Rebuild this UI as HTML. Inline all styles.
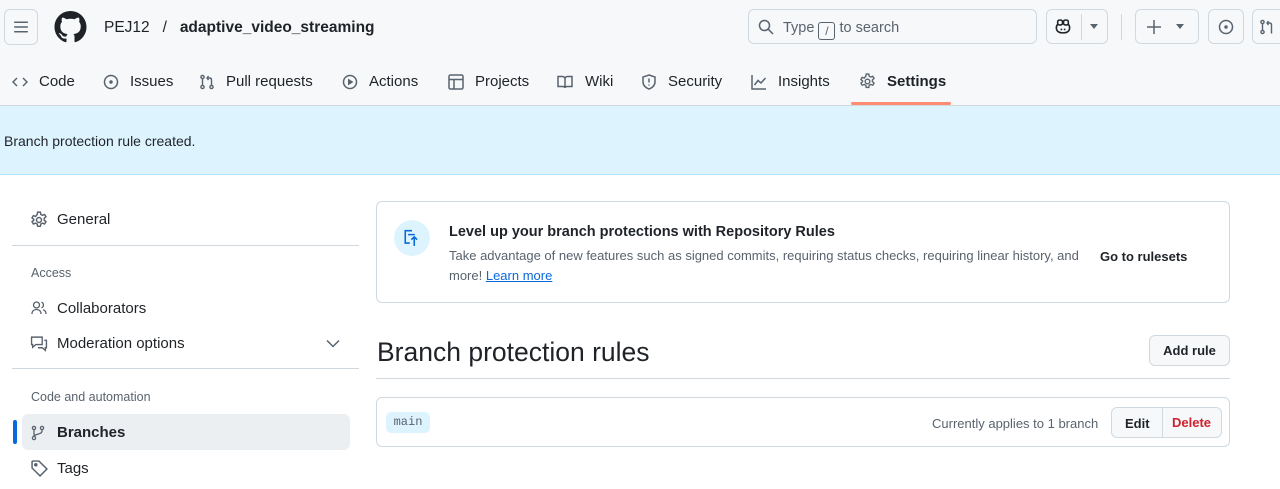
<!DOCTYPE html>
<html><head><meta charset="utf-8"><style>
*{box-sizing:border-box;margin:0;padding:0}
body{width:1280px;height:489px;overflow:hidden;background:#fff;font-family:"Liberation Sans",sans-serif;color:#1f2328;position:relative}
.abs{position:absolute}
svg{display:block}
.hdr{position:absolute;left:0;top:0;width:1280px;height:106px;background:#f6f8fa;border-bottom:1px solid #d1d9e0}
.btn{position:absolute;border:1px solid #d1d9e0;border-radius:6px;background:#f6f8fa}
.tab{position:absolute;top:73px;font-size:15px;display:flex;align-items:center;gap:11px;color:#1f2328}
.flash{position:absolute;left:0;top:106px;width:1280px;height:69px;background:#ddf4ff;border-bottom:1px solid #b6e3ff;font-size:14px;padding:27px 4px}
.side{position:absolute;left:30px;font-size:15px;display:flex;align-items:center;gap:10px}
.hd{position:absolute;left:31px;font-size:12.5px;color:#59636e}
.sep{position:absolute;left:12px;width:347px;height:1px;background:#d1d9e0}
</style></head><body>
<div class="hdr"></div>
<div class="btn" style="left:4px;top:9px;width:34px;height:36px"></div>
<svg class="abs" style="left:13px;top:19px" width="16" height="16" viewBox="0 0 16 16" fill="#59636e"><rect x="1" y="2.5" width="14" height="1.5" rx=".7"/><rect x="1" y="7.25" width="14" height="1.5" rx=".7"/><rect x="1" y="12" width="14" height="1.5" rx=".7"/></svg>
<svg class="abs" style="left:54px;top:11px" width="33" height="32" viewBox="0 0 16 16" fill="#1f2328"><path d="M8 0C3.58 0 0 3.58 0 8c0 3.540 2.29 6.53 5.47 7.59.4.07.55-.17.55-.38 0-.19-.01-.82-.01-1.49-2.01.37-2.530-.49-2.69-.94-.09-.23-.48-.94-.82-1.13-.28-.15-.68-.52-.01-.53.63-.01 1.08.58 1.23.82.72 1.21 1.87.87 2.33.66.07-.52.28-.87.51-1.07-1.78-.2-3.64-.89-3.64-3.95 0-.87.31-1.59.82-2.15-.08-.2-.36-1.02.08-2.12 0 0 .67-.21 2.2.82.64-.18 1.32-.27 2-.27.68 0 1.36.09 2 .27 1.53-1.04 2.2-.82 2.2-.82.44 1.1.16 1.92.08 2.12.51.56.82 1.27.82 2.15 0 3.07-1.87 3.75-3.65 3.95.29.25.54.73.54 1.48 0 1.070-.01 1.93-.01 2.2 0 .21.15.46.55.38A8.013 8.013 0 0016 8c0-4.42-3.58-8-8-8z"/></svg>
<div class="abs" style="left:104px;top:19px;font-size:15.5px">PEJ12 &nbsp;&nbsp;/&nbsp;&nbsp; <span style="font-weight:600">adaptive_video_streaming</span></div>

<div class="btn" style="left:748px;top:9px;width:289px;height:35px;background:#fff0"></div>
<svg class="abs" style="left:758px;top:19px" width="16" height="16" viewBox="0 0 16 16" fill="none" stroke="#59636e" stroke-width="1.5"><circle cx="6.5" cy="6.5" r="5"/><path d="M10.2 10.2L15 15"/></svg>
<div class="abs" style="left:783px;top:20px;font-size:14.5px;color:#59636e">Type <span style="display:inline-block;border:1px solid #59636e;border-radius:3px;width:17px;height:18px;text-align:center;font-size:12px;line-height:16px;vertical-align:-3px">/</span> to search</div>
<div class="btn" style="left:1046px;top:9px;width:62px;height:35px"></div>
<div class="abs" style="left:1081px;top:14px;width:1px;height:26px;background:#d1d9e0"></div>
<svg class="abs" style="left:1054px;top:18px" width="18" height="17" viewBox="0 0 16 16" fill="none" stroke="#1f2328" stroke-width="1.5"><path d="M3 6c-1 1-1.5 3-1 5 1 2.5 4 3 6 3s5-.5 6-3c.5-2 0-4-1-5"/><rect x="3" y="2" width="4.5" height="4.5" rx="1.5"/><rect x="8.5" y="2" width="4.5" height="4.5" rx="1.5"/><path d="M6.5 10v1.5M9.5 10v1.5"/></svg>
<svg class="abs" style="left:1090px;top:24px" width="8" height="5" viewBox="0 0 8 5" fill="#59636e"><path d="M0 0h8L4 5z"/></svg>
<div class="abs" style="left:1121px;top:14px;width:1px;height:26px;background:#d1d9e0"></div>
<div class="btn" style="left:1135px;top:9px;width:64px;height:35px"></div>
<svg class="abs" style="left:1146px;top:19px" width="16" height="16" viewBox="0 0 16 16" stroke="#59636e" stroke-width="1.5"><path d="M8 1v14M1 8h14"/></svg>
<svg class="abs" style="left:1176px;top:24px" width="8" height="5" viewBox="0 0 8 5" fill="#59636e"><path d="M0 0h8L4 5z"/></svg>
<div class="btn" style="left:1208px;top:9px;width:36px;height:35px"></div>
<svg class="abs" style="left:1218px;top:19px" width="16" height="16" viewBox="0 0 16 16" fill="none" stroke="#59636e" stroke-width="1.5"><circle cx="8" cy="8" r="6.5"/><circle cx="8" cy="8" r="1" fill="#59636e"/></svg>
<div class="btn" style="left:1252px;top:9px;width:40px;height:35px"></div>
<svg class="abs" style="left:1259px;top:19px" width="16" height="16" viewBox="0 0 16 16" fill="none" stroke="#59636e" stroke-width="1.4"><circle cx="3.5" cy="3" r="1.6"/><circle cx="3.5" cy="13" r="1.6"/><path d="M3.5 4.6v6.8M12.5 14.5V6c0-1.5-1-2-2-2H8M9.5 2L8 4l1.5 2"/></svg>

<div class="tab" style="left:12px"><svg width="16" height="16" viewBox="0 0 16 16" fill="none" stroke="#59636e" stroke-width="1.5"><path d="M5 4L1 8l4 4M11 4l4 4-4 4"/></svg>Code</div>
<div class="tab" style="left:103px"><svg width="16" height="16" viewBox="0 0 16 16" fill="none" stroke="#59636e" stroke-width="1.5"><circle cx="8" cy="8" r="6.5"/><circle cx="8" cy="8" r="1" fill="#59636e"/></svg>Issues</div>
<div class="tab" style="left:199px"><svg width="16" height="16" viewBox="0 0 16 16" fill="none" stroke="#59636e" stroke-width="1.4"><circle cx="3.5" cy="3" r="1.6"/><circle cx="3.5" cy="13" r="1.6"/><circle cx="12.5" cy="13" r="1.6"/><path d="M3.5 4.6v6.8M12.5 11.4V6c0-1.5-1-2-2-2H8M9.5 2L8 4l1.5 2"/></svg>Pull requests</div>
<div class="tab" style="left:342px"><svg width="16" height="16" viewBox="0 0 16 16" fill="none" stroke="#59636e" stroke-width="1.5"><circle cx="8" cy="8" r="6.5"/><path d="M6.5 5.5v5l4-2.5z" fill="#59636e" stroke-width="1"/></svg>Actions</div>
<div class="tab" style="left:448px"><svg width="16" height="16" viewBox="0 0 16 16" fill="none" stroke="#59636e" stroke-width="1.5"><rect x="1" y="1" width="14" height="14" rx="1.5"/><path d="M1 5.5h14M6 5.5V15"/></svg>Projects</div>
<div class="tab" style="left:556px"><svg width="18" height="16" viewBox="0 0 16 16" fill="none" stroke="#59636e" stroke-width="1.5"><path d="M1 2.5h4.5c1.5 0 2.5 1 2.5 2.5v9c0-1-1-1.5-2-1.5H1zM15 2.5h-4.5C9 2.5 8 3.5 8 5v9c0-1 1-1.5 2-1.5h5z"/></svg>Wiki</div>
<div class="tab" style="left:641px"><svg width="16" height="16" viewBox="0 0 16 16" fill="none" stroke="#59636e" stroke-width="1.5"><path d="M8 1l6 2v5c0 3.5-3 6-6 7-3-1-6-3.5-6-7V3z"/><path d="M8 4.5v4M8 10.5v1"/></svg>Security</div>
<div class="tab" style="left:751px"><svg width="16" height="16" viewBox="0 0 16 16" fill="none" stroke="#59636e" stroke-width="1.5"><path d="M1 1v14h14M3.5 11l3.5-4.5 3 2.5 4.5-5"/></svg>Insights</div>
<div class="tab" style="left:859px;font-weight:600"><svg width="17" height="17" viewBox="0 0 16 16" fill="none" stroke="#59636e" stroke-width="1.3"><path d="M6.8 1h2.4l.4 2 1.4.8 2-.7 1.2 2-1.6 1.4v1.6l1.6 1.4-1.2 2-2-.7-1.4.8-.4 2H6.8l-.4-2-1.4-.8-2 .7-1.2-2 1.6-1.4V7.5L1.8 6.1l1.2-2 2 .7L6.4 3z"/><circle cx="8" cy="8" r="2.2"/></svg>Settings</div>
<div class="abs" style="left:851px;top:102px;width:100px;height:3px;background:#fd8c73;border-radius:2px"></div>

<div class="flash">Branch protection rule created.</div>

<svg class="abs" style="left:30px;top:211px" width="18" height="18" viewBox="0 0 16 16" fill="none" stroke="#59636e" stroke-width="1.3"><path d="M6.8 1h2.4l.4 2 1.4.8 2-.7 1.2 2-1.6 1.4v1.6l1.6 1.4-1.2 2-2-.7-1.4.8-.4 2H6.8l-.4-2-1.4-.8-2 .7-1.2-2 1.6-1.4V7.5L1.8 6.1l1.2-2 2 .7L6.4 3z"/><circle cx="8" cy="8" r="2.2"/></svg>
<div class="side" style="left:57px;top:211px">General</div>
<div class="sep" style="top:245px"></div>
<div class="hd" style="top:266px">Access</div>
<svg class="abs" style="left:30px;top:300px" width="18" height="16" viewBox="0 0 16 16" fill="none" stroke="#59636e" stroke-width="1.3"><circle cx="5.5" cy="5" r="3"/><path d="M1 14c0-3 2-4.5 4.5-4.5S10 11 10 14M10.5 2.2a3 3 0 010 5.6M12 9.8c2 .6 3 2 3 4.2"/></svg>
<div class="side" style="left:57px;top:300px">Collaborators</div>
<svg class="abs" style="left:30px;top:335px" width="18" height="17" viewBox="0 0 16 16" fill="none" stroke="#59636e" stroke-width="1.3"><path d="M1 2h10v7H5l-3 2.5V9H1zM13 5h2v7h-1v2.5L11 12H7"/></svg>
<div class="side" style="left:57px;top:335px">Moderation options</div>
<svg class="abs" style="left:326px;top:339px" width="14" height="9" viewBox="0 0 14 9" fill="none" stroke="#59636e" stroke-width="1.5"><path d="M1 1.5l6 6 6-6"/></svg>
<div class="sep" style="top:368px"></div>
<div class="hd" style="top:390px">Code and automation</div>
<div class="abs" style="left:22px;top:414px;width:328px;height:36px;background:#eceff2;border-radius:6px"></div>
<div class="abs" style="left:13px;top:420px;width:4px;height:24px;background:#0969da;border-radius:3px"></div>
<svg class="abs" style="left:30px;top:424px" width="16" height="18" viewBox="0 0 16 16" fill="none" stroke="#59636e" stroke-width="1.3"><circle cx="4" cy="3" r="1.6"/><circle cx="12" cy="3" r="1.6"/><circle cx="4" cy="13" r="1.6"/><path d="M4 4.6v6.8M12 4.6v1c0 2.5-2 3-4 3.5s-4 1-4 2.9"/></svg>
<div class="side" style="left:57px;top:424px;font-weight:600">Branches</div>
<svg class="abs" style="left:31px;top:460px" width="17" height="17" viewBox="0 0 16 16" fill="none" stroke="#59636e" stroke-width="1.4"><path d="M1 1.5v6l7.5 7.5 6.5-6.5L7.5 1H1.5z"/><circle cx="4.5" cy="4.5" r="1" fill="#59636e"/></svg>
<div class="side" style="left:57px;top:460px">Tags</div>

<div class="abs" style="left:376px;top:201px;width:854px;height:102px;border:1px solid #d1d9e0;border-radius:6px"></div>
<div class="abs" style="left:394px;top:220px;width:36px;height:36px;border-radius:50%;background:#ddf4ff"></div>
<svg class="abs" style="left:403px;top:229px" width="18" height="18" viewBox="0 0 16 16" fill="none" stroke="#0969da" stroke-width="1.4"><path d="M8 1.5H2v11h4M10 15V7M7.5 9.5L10 7l2.5 2.5M4.5 5h6"/></svg>
<div class="abs" style="left:449px;top:224px;font-size:14.5px;font-weight:600">Level up your branch protections with Repository Rules</div>
<div class="abs" style="left:449px;top:246px;font-size:13px;color:#59636e;line-height:20px;width:650px">Take advantage of new features such as signed commits, requiring status checks, requiring linear history, and more! <span style="color:#0969da;text-decoration:underline">Learn more</span></div>
<div class="abs" style="left:1100px;top:249px;font-size:13px;font-weight:600">Go to rulesets</div>

<div class="abs" style="left:377px;top:337px;font-size:26.5px">Branch protection rules</div>
<div class="btn" style="left:1149px;top:335px;width:81px;height:31px;font-size:13px;font-weight:600;text-align:center;line-height:29px">Add rule</div>
<div class="abs" style="left:376px;top:378px;width:854px;height:1px;background:#d1d9e0"></div>

<div class="abs" style="left:376px;top:397px;width:854px;height:50px;border:1px solid #d1d9e0;border-radius:6px"></div>
<div class="abs" style="left:386px;top:412px;width:44px;height:21px;background:#ddf4ff;border-radius:5px;font-family:'Liberation Mono',monospace;font-size:12px;color:#59636e;text-align:center;line-height:21px">main</div>
<div class="abs" style="left:932px;top:416px;font-size:13px;color:#59636e">Currently applies to 1 branch</div>
<div class="btn" style="left:1111px;top:407px;width:111px;height:31px"></div>
<div class="abs" style="left:1162px;top:407px;width:1px;height:31px;background:#d1d9e0"></div>
<div class="abs" style="left:1125px;top:416px;font-size:13px;font-weight:600">Edit</div>
<div class="abs" style="left:1172px;top:415px;font-size:13px;font-weight:600;color:#cf222e">Delete</div>
</body></html>
